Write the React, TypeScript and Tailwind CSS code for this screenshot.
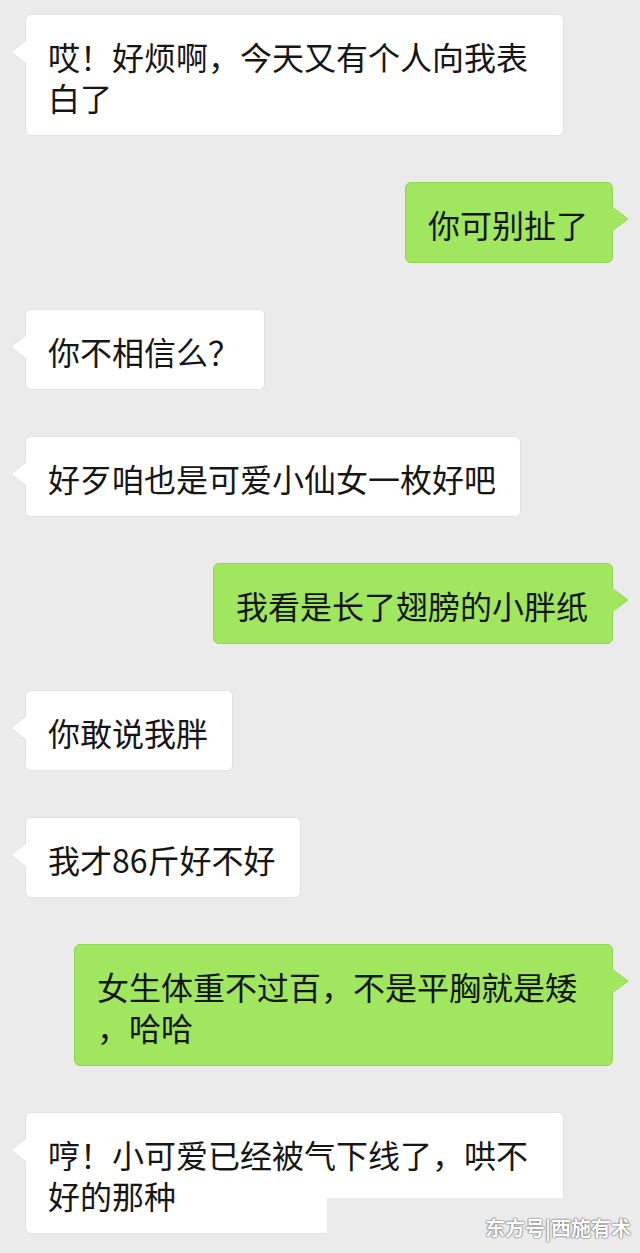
const messages = [
  { id: 1, side: "left", text: "哎！好烦啊，今天又有个人向我表白了" },
  { id: 2, side: "right", text: "你可别扯了" },
  { id: 3, side: "left", text: "你不相信么？" },
  { id: 4, side: "left", text: "好歹咱也是可爱小仙女一枚好吧" },
  { id: 5, side: "right", text: "我看是长了翅膀的小胖纸" },
  { id: 6, side: "left", text: "你敢说我胖" },
  { id: 7, side: "left", text: "我才86斤好不好" },
  { id: 8, side: "right", text: "女生体重不过百，不是平胸就是矮，哈哈" },
  { id: 9, side: "left", text: "哼！小可爱已经被气下线了，哄不好的那种" },
];

function Tail({ side }: { side: string }) {
  if (side === "left") {
    return (
      <svg width="17" height="24" viewBox="0 0 17 24" className="absolute left-[-16px] top-[25px]">
        <polygon points="17,0 1,12 17,24" fill="#ffffff" />
        <polyline points="16,0 1,12 16,24" fill="none" stroke="#e2e2e2" strokeWidth="1" />
      </svg>
    );
  }
  return (
    <svg width="18" height="24" viewBox="0 0 18 24" className="absolute right-[-17px] top-[24px]">
      <polygon points="0,0 17,12 0,24" fill="#a0e65e" />
      <polyline points="1,0 17,12 1,24" fill="none" stroke="#93d457" strokeWidth="1" />
    </svg>
  );
}

function Bubble({ side, text }: { side: string; text: string }) {
  const isLeft = side === "left";
  return (
    <div className={`flex ${isLeft ? "justify-start pl-[25px]" : "justify-end pr-[27px]"}`}>
      <div
        className={`relative max-w-[539px] rounded-md border pl-[22px] pr-6 pt-[21px] pb-[17px] text-[32px] leading-[41px] text-[#161616] [line-break:anywhere] ${
          isLeft ? "bg-white border-[#e2e2e2]" : "bg-[#a0e65e] border-[#93d457]"
        }`}
      >
        <Tail side={side} />
        {text}
      </div>
    </div>
  );
}

export default function App() {
  return (
    <div className="relative h-[1253px] w-[640px] overflow-hidden bg-[#ebebeb] pt-[14px] font-['Noto_Sans_CJK_SC','Noto_Sans',sans-serif]">
      <div className="flex flex-col gap-[46px]">
        {messages.map((m) => (
          <Bubble key={m.id} side={m.side} text={m.text} />
        ))}
      </div>

      <div className="absolute left-[327px] top-[1198px] right-0 bottom-0 bg-[#ebebeb]">
        <p className="absolute right-[9px] top-[18px] text-[20px] leading-6 font-bold text-white [text-shadow:0_0_2px_#555,0_0_1px_#555]">
          东方号|西施有术
        </p>
      </div>
    </div>
  );
}
